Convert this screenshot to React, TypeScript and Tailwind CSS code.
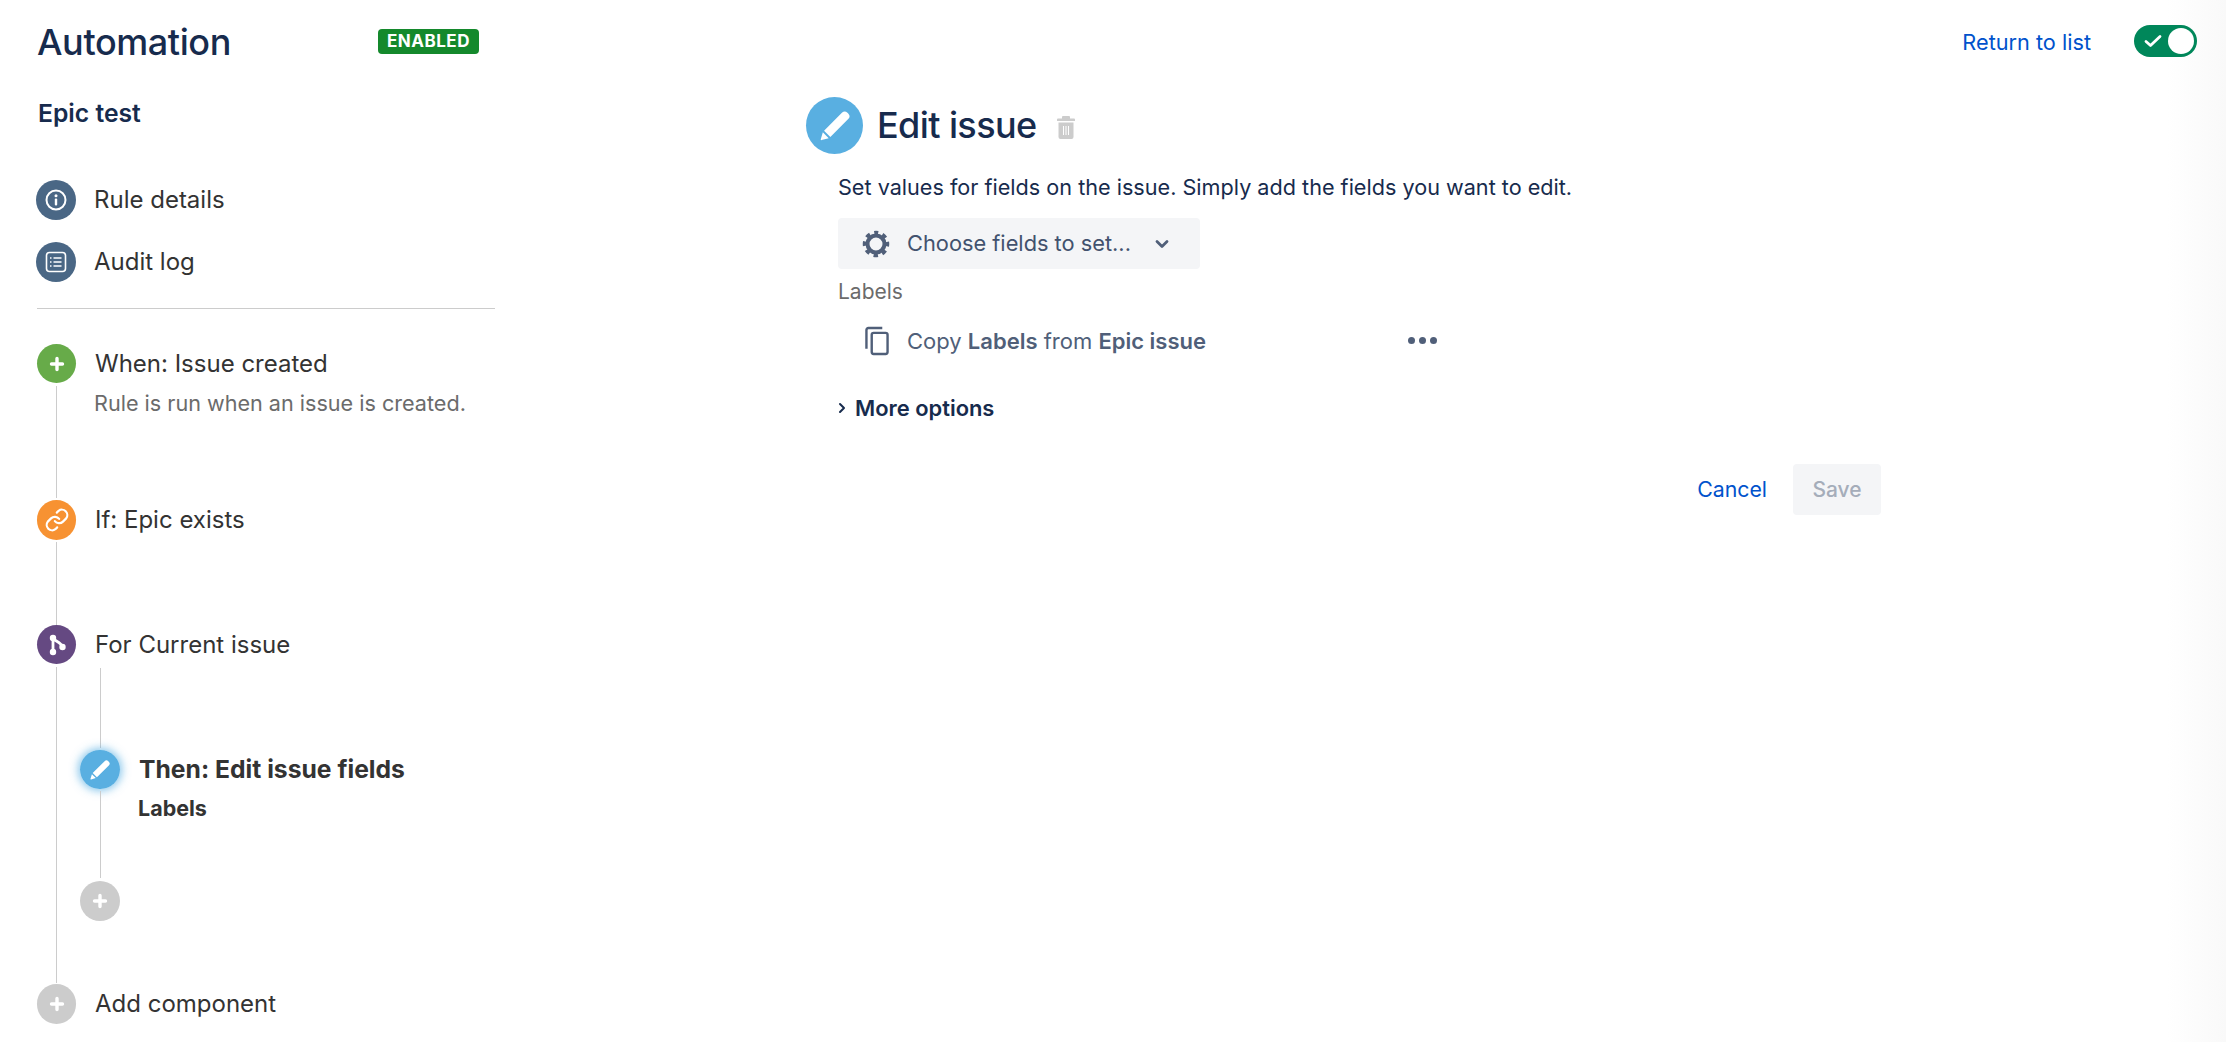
import React from "react";

const PlusIcon = () => (
  <svg width="16" height="16" viewBox="0 0 16 16" fill="none" stroke="#fff" strokeWidth="3.4" strokeLinecap="round">
    <path d="M8 2.5v11M2.5 8h11" />
  </svg>
);

const PencilIcon = ({ size }: { size: number }) => (
  <svg width={size} height={size} viewBox="0 0 24 24" fill="#fff">
    <path d="M16.6 3.2a2.6 2.6 0 0 1 3.7 0l.5.5a2.6 2.6 0 0 1 0 3.7L8.900 19.3 4.700 15.1 16.6 3.2Z" />
    <path d="M3.900 16.2l3.900 3.900-4.700 1.300a.5.5 0 0 1-.6-.6l1.400-4.600Z" />
  </svg>
);

const Circle = ({ color, children, size = "w-[39px] h-[39px]" }: { color: string; children?: React.ReactNode; size?: string }) => (
  <div className={`${size} ${color} rounded-full flex items-center justify-center shrink-0`}>{children}</div>
);

const Rail = ({ className }: { className: string }) => <div className={`w-px bg-[#cccccc] ${className}`} />;

export default function App() {
  return (
    <div className="flex w-full h-[1042px] overflow-hidden bg-[linear-gradient(to_right,#ffffff_2167px,#f9f9f9_100%)] font-['Inter',sans-serif] text-[#333333]">
      <aside className="w-[806px] shrink-0 pl-[37px]">
        <div className="flex items-center pt-[16px] h-[68px]">
          <h1 className="w-[341px] text-[36px] leading-[48px] font-medium tracking-[-0.4px] text-[#172b4d]">Automation</h1>
          <span className="w-[101px] h-[25px] -mt-[2px] rounded-[4px] bg-[#14892c] text-white text-[17px] leading-[25px] font-bold text-center tracking-[0.5px]">ENABLED</span>
        </div>
        <h2 className="mt-[28px] ml-[1px] text-[24.7px] leading-[34px] font-semibold text-[#172b4d]">Epic test</h2>

        <div className="w-[458px] mt-[50px] pb-[26px] border-b border-[#cccccc]">
          <div className="flex items-center gap-[18px] -ml-[1px]">
            <Circle color="bg-[#4a6785]" size="w-[40px] h-[40px]">
              <svg width="24" height="24" viewBox="0 0 24 24" fill="none">
                <circle cx="12" cy="12" r="9.5" stroke="#fff" strokeWidth="2" />
                <circle cx="12" cy="7.800" r="1.500" fill="#fff" />
                <rect x="10.800" y="10.500" width="2.400" height="7" rx="1" fill="#fff" />
              </svg>
            </Circle>
            <span className="text-[24px] leading-[40px]">Rule details</span>
          </div>
          <div className="flex items-center gap-[18px] -ml-[1px] mt-[22px]">
            <Circle color="bg-[#4a6785]" size="w-[40px] h-[40px]">
              <svg width="24" height="24" viewBox="0 0 24 24" fill="none">
                <rect x="2.500" y="2.500" width="19" height="19" rx="3" stroke="#fff" strokeWidth="1.600" />
                <path d="M9.500 8h8M9.500 12h8M9.500 16h8" stroke="#fff" strokeWidth="1.600" />
                <path d="M6 8h1.500M6 12h1.500M6 16h1.500" stroke="#fff" strokeWidth="1.600" />
              </svg>
            </Circle>
            <span className="text-[24px] leading-[40px]">Audit log</span>
          </div>
        </div>

        <div className="mt-[35px] flex h-[156px]">
          <div className="w-[39px] flex flex-col items-center">
            <Circle color="bg-[#67ab49]"><PlusIcon /></Circle>
            <Rail className="mt-[3px] h-[112px]" />
          </div>
          <div className="ml-[19px]">
            <p className="text-[24px] leading-[40px]">When: Issue created</p>
            <p className="-ml-[1px] mt-[-1px] text-[21.6px] leading-[40px] text-[#6b6b6b]">Rule is run when an issue is created.</p>
          </div>
        </div>

        <div className="flex h-[125px]">
          <div className="w-[39px] flex flex-col items-center">
            <Circle color="bg-[#f79232]" size="w-[39px] h-[40px]">
              <svg width="26" height="26" viewBox="0 0 24 24" fill="none" stroke="#fff" strokeWidth="2" strokeLinecap="round" strokeLinejoin="round">
                <path d="M10 13a5 5 0 0 0 7.500.5l3-3a5 5 0 0 0-7-7l-1.700 1.700" />
                <path d="M14 11a5 5 0 0 0-7.500-.5l-3 3a5 5 0 0 0 7 7l1.700-1.700" />
              </svg>
            </Circle>
            <Rail className="mt-[2px] h-[83px]" />
          </div>
          <p className="ml-[19px] text-[24px] leading-[40px]">If: Epic exists</p>
        </div>

        <div className="flex h-[358px]">
          <div className="w-[39px] flex flex-col items-center">
            <Circle color="bg-[#654982]">
              <svg width="24" height="24" viewBox="0 0 24 24" fill="#fff" stroke="#fff" strokeWidth="2.800" strokeLinecap="round">
                <circle cx="8" cy="5" r="1.800" />
                <circle cx="8" cy="19" r="1.800" />
                <circle cx="17.500" cy="14" r="1.800" />
                <path d="M8 5v14M8 5c1 3 8 4 9.500 9" fill="none" />
              </svg>
            </Circle>
            <Rail className="mt-[3px] h-[316px]" />
          </div>
          <div className="ml-[4px]">
            <p className="ml-[15px] text-[24px] leading-[40px]">For Current issue</p>
            <div className="flex mt-[3px]">
              <div className="w-[40px] flex flex-col items-center">
                <Rail className="h-[80px]" />
                <div className="mt-[2px] rounded-full shadow-[0_0_8px_2px_rgba(88,175,226,0.7)]">
                  <Circle color="bg-[#59afe1]" size="w-[40px] h-[39px]"><PencilIcon size={24} /></Circle>
                </div>
                <Rail className="mt-[2px] h-[87px]" />
                <div className="mt-[3px]">
                  <Circle color="bg-[#cccccc]" size="w-[40px] h-[40px]"><PlusIcon /></Circle>
                </div>
              </div>
              <div className="ml-[19px] mt-[81px]">
                <p className="text-[24.7px] leading-[40px] font-bold">Then: Edit issue fields</p>
                <p className="-ml-[1px] text-[21.5px] leading-[38px] font-bold">Labels</p>
              </div>
            </div>
          </div>
        </div>

        <div className="flex items-center gap-[19px]">
          <Circle color="bg-[#cccccc]" size="w-[39px] h-[40px]"><PlusIcon /></Circle>
          <span className="mt-[1px] text-[24px] leading-[40px]">Add component</span>
        </div>
      </aside>

      <main className="flex-1 relative">
        <div className="w-[1075px] pt-[97px]">
          <div className="flex items-center">
            <Circle color="bg-[#59afe1]" size="w-[57px] h-[57px]"><PencilIcon size={36} /></Circle>
            <h2 className="ml-[14px] pb-[2px] text-[36px] leading-[48px] font-medium tracking-[-0.6px] text-[#172b4d]">Edit issue</h2>
            <svg className="ml-[20px] mt-[4px]" width="18" height="23" viewBox="0 0 18 23" fill="#cccccc">
              <path d="M6 0h6a1 1 0 0 1 1 1v1.500h4a1 1 0 0 1 1 1V5H0V3.500a1 1 0 0 1 1-1h4V1a1 1 0 0 1 1-1Z" />
              <path fillRule="evenodd" d="M1.500 6.500h15V21a2 2 0 0 1-2 2h-11a2 2 0 0 1-2-2V6.500ZM6 10v9h1V10H6Zm2.500 0v9h1V10h-1ZM11 10v9h1V10h-1Z" />
            </svg>
          </div>
          <div className="ml-[32px]">
            <p className="mt-[17px] text-[21.63px] leading-[32px] text-[#172b4d]">Set values for fields on the issue. Simply add the fields you want to edit.</p>
            <button className="mt-[15px] flex items-center w-[362px] h-[51px] rounded-[4px] bg-[#f4f5f7] text-[#42526e] text-[21.8px]">
              <svg className="ml-[23px]" width="30" height="30" viewBox="0 0 30 30" fill="none" stroke="#505f79">
                <circle cx="15" cy="15" r="8.500" strokeWidth="4" />
                <circle cx="15" cy="15" r="11.500" strokeWidth="3.500" strokeDasharray="4.500 4.530" strokeDashoffset="2.250" transform="rotate(-90 15 15)" />
              </svg>
              <span className="ml-[16px]">Choose fields to set...</span>
              <svg className="ml-[23px]" width="16" height="16" viewBox="0 0 16 16" fill="none" stroke="#505f79" strokeWidth="2.800" strokeLinecap="round" strokeLinejoin="round">
                <path d="M3 5.500l5 5 5-5" />
              </svg>
            </button>
            <p className="mt-[9px] text-[21px] leading-[28px] text-[#6b6b6b]">Labels</p>
            <div className="mt-[15px] flex items-center h-[40px]">
              <svg className="ml-[27px]" width="24" height="30" viewBox="0 0 25 30" fill="none" stroke="#505f79" strokeWidth="2.500">
                <path d="M18 1.500H3.500a2 2 0 0 0-2 2V23" />
                <rect x="7" y="6.500" width="16.500" height="22" rx="2" />
              </svg>
              <p className="ml-[18px] w-[500px] text-[22px] text-[#505f79]">Copy <b className="font-semibold">Labels</b> from <b className="font-semibold">Epic issue</b></p>
              <div className="flex gap-[4px] ml-[1px] -mt-[2px]">
                <span className="w-[7px] h-[7px] rounded-full bg-[#505f79]" />
                <span className="w-[7px] h-[7px] rounded-full bg-[#505f79]" />
                <span className="w-[7px] h-[7px] rounded-full bg-[#505f79]" />
              </div>
            </div>
            <div className="mt-[31px] flex items-center">
              <svg width="8" height="12" viewBox="0 0 8 12" fill="none" stroke="#172b4d" strokeWidth="2" strokeLinecap="round" strokeLinejoin="round">
                <path d="M2 2l4 4-4 4" />
              </svg>
              <span className="ml-[9px] text-[21.9px] leading-[32px] font-semibold text-[#172b4d]">More options</span>
            </div>
            <div className="mt-[40px] flex items-center justify-end">
              <span className="text-[21.3px] text-[#0052cc]">Cancel</span>
              <span className="ml-[26px] w-[88px] h-[51px] rounded-[4px] bg-[#f4f5f7] text-[#a5adba] text-[21px] font-medium flex items-center justify-center">Save</span>
            </div>
          </div>
        </div>
        <div className="absolute top-[24px] right-[29px] flex items-center">
          <span className="mt-[2px] text-[21.7px] text-[#0052cc]">Return to list</span>
          <div className="ml-[43px] w-[63px] h-[32px] rounded-full bg-[#00875a] flex items-center justify-between pl-[9px] pr-[3px]">
            <svg width="20" height="16" viewBox="0 0 20 16" fill="none" stroke="#fff" strokeWidth="2.800" strokeLinecap="round" strokeLinejoin="round">
              <path d="M3 8.500l4.500 4L17 3.500" />
            </svg>
            <span className="w-[26px] h-[26px] rounded-full bg-white" />
          </div>
        </div>
      </main>
    </div>
  );
}
